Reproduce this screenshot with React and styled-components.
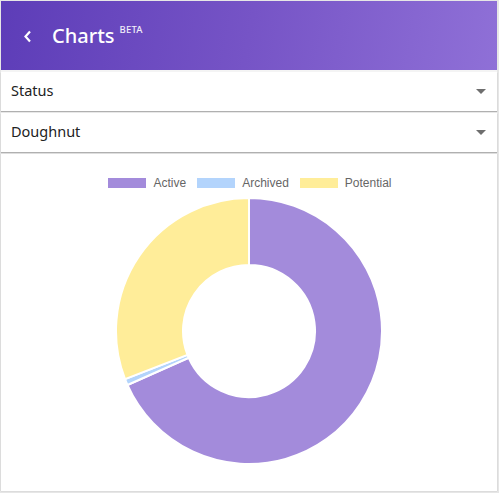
import React from "react";
import styled, { createGlobalStyle } from "styled-components";

const Global = createGlobalStyle`
  html, body { margin: 0; padding: 0; background: #fff; }
  * { box-sizing: border-box; }
`;

const Frame = styled.div`
  width: 499px;
  height: 493px;
  border-style: solid;
  border-color: #e6e6e6;
  border-width: 1px 2px 2px 1px;
  display: flex;
  flex-direction: column;
  gap: 2px;
  font-family: "Noto Sans", "Open Sans", sans-serif;
  background: #f4f4f4;
`;

const Header = styled.header`
  height: 69px;
  flex: none;
  display: flex;
  align-items: center;
  padding-left: 20px;
  background: linear-gradient(100deg, #5d3db8 0%, #7654c6 50%, #8f70d7 100%);
  color: #fff;
`;

const Back = styled.button`
  border: 0;
  background: none;
  padding: 0;
  width: 12px;
  height: 14px;
  display: flex;
  align-items: center;
  justify-content: center;
  margin-right: 19px;
  margin-top: 2px;
  cursor: pointer;
`;

const Title = styled.h1`
  margin: 0;
  font-size: 20px;
  font-weight: 500;
  line-height: 1;
  display: flex;
  align-items: flex-start;
`;

const Sup = styled.sup`
  font-size: 9.5px;
  font-weight: 500;
  margin-left: 5px;
  margin-top: -1px;
  letter-spacing: 0.2px;
  opacity: 0.9;
  line-height: 1;
`;

const SelectRow = styled.div`
  height: 39px;
  flex: none;
  background: #fff;
  display: flex;
  align-items: center;
  justify-content: space-between;
  padding: 0 11px 3px 10px;
  font-size: 14.5px;
  color: #222;
  box-shadow: 0 1px 1px rgba(0, 0, 0, 0.28);
`;

const Caret = styled.span`
  width: 0;
  height: 0;
  border-left: 5px solid transparent;
  border-right: 5px solid transparent;
  border-top: 5px solid #6e6e6e;
  margin-top: 3px;
`;

const ChartCard = styled.section`
  flex: 1;
  background: #fff;
  display: flex;
  flex-direction: column;
  align-items: center;
  padding-top: 23px;
  box-shadow: 0 0 1px rgba(0, 0, 0, 0.25);
`;

const Legend = styled.ul`
  list-style: none;
  margin: 0;
  padding: 0;
  display: flex;
  gap: 11px;
  font-family: "Liberation Sans", Arial, sans-serif;
  font-size: 12px;
  color: #666;
  margin-left: 2px;
`;

const LegendItem = styled.li`
  display: flex;
  align-items: center;
  gap: 7px;
  height: 12px;
`;

const Swatch = styled.span`
  width: 38px;
  height: 10px;
  background: ${(p) => p.$color};
`;

const ChartSvg = styled.svg`
  margin-top: 8px;
  display: block;
`;

const data = [
  { label: "Active", value: 68.35, color: "#a38bdb" },
  { label: "Archived", value: 0.75, color: "#b3d4fc" },
  { label: "Potential", value: 30.9, color: "#ffed99" },
];

function arcPath(cx, cy, ro, ri, a0, a1) {
  const p = (r, a) => [cx + r * Math.sin(a), cy - r * Math.cos(a)];
  const large = a1 - a0 > Math.PI ? 1 : 0;
  const [x0, y0] = p(ro, a0);
  const [x1, y1] = p(ro, a1);
  const [x2, y2] = p(ri, a1);
  const [x3, y3] = p(ri, a0);
  return `M${x0} ${y0} A${ro} ${ro} 0 ${large} 1 ${x1} ${y1} L${x2} ${y2} A${ri} ${ri} 0 ${large} 0 ${x3} ${y3} Z`;
}

function Doughnut() {
  const size = 268;
  const c = size / 2;
  const total = data.reduce((s, d) => s + d.value, 0);
  let a = 0;
  return (
    <ChartSvg width={size} height={size} viewBox={`0 0 ${size} ${size}`}>
      {data.map((d) => {
        const a0 = a;
        const a1 = a + (d.value / total) * Math.PI * 2;
        a = a1;
        return (
          <path
            key={d.label}
            d={arcPath(c, c, 133, 66, a0, a1)}
            fill={d.color}
            stroke="#fff"
            strokeWidth="2"
            strokeLinejoin="bevel"
          />
        );
      })}
    </ChartSvg>
  );
}

export default function App() {
  return (
    <>
      <Global />
      <Frame>
        <Header>
          <Back aria-label="Back">
            <svg width="9" height="13" viewBox="0 0 9 13">
              <path d="M7 1.5 L2.5 6.5 L7 11.5" fill="none" stroke="#fff" strokeWidth="2.2" />
            </svg>
          </Back>
          <Title>
            Charts<Sup>BETA</Sup>
          </Title>
        </Header>
        <SelectRow>
          <span>Status</span>
          <Caret />
        </SelectRow>
        <SelectRow>
          <span>Doughnut</span>
          <Caret />
        </SelectRow>
        <ChartCard>
          <Legend>
            {data.map((d) => (
              <LegendItem key={d.label}>
                <Swatch $color={d.color} />
                {d.label}
              </LegendItem>
            ))}
          </Legend>
          <Doughnut />
        </ChartCard>
      </Frame>
    </>
  );
}
